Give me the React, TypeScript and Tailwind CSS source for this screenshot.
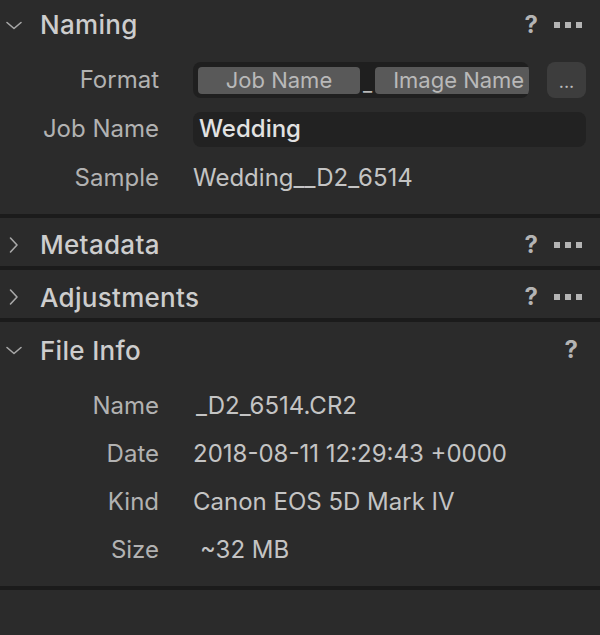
import React from "react";

function Chevron({ open }: { open: boolean }) {
  return open ? (
    <svg width="18" height="18" viewBox="0 0 18 18" className="text-[#a8a8a8]">
      <path d="M2 6.5 L9 12.5 L16 6.5" fill="none" stroke="currentColor" strokeWidth="1.6" strokeLinecap="round" strokeLinejoin="round" />
    </svg>
  ) : (
    <svg width="18" height="18" viewBox="0 0 18 18" className="text-[#a8a8a8]">
      <path d="M5.5 2 L12 9 L5.5 16" fill="none" stroke="currentColor" strokeWidth="1.6" strokeLinecap="round" strokeLinejoin="round" />
    </svg>
  );
}

function Dots() {
  return (
    <div className="flex items-center gap-[5px]">
      <span className="w-[6px] h-[6px] bg-[#b4b4b4]" />
      <span className="w-[6px] h-[6px] bg-[#b4b4b4]" />
      <span className="w-[6px] h-[6px] bg-[#b4b4b4]" />
    </div>
  );
}

function Header({
  title,
  open,
  more = true,
  className = "",
}: {
  title: string;
  open: boolean;
  more?: boolean;
  className?: string;
}) {
  return (
    <div className={`flex items-center h-12 pl-[5px] pr-[18px] ${className}`}>
      <div className="w-[35px] flex items-center">
        <Chevron open={open} />
      </div>
      <span className="text-[26px] font-medium text-[#cdcdcd] tracking-[0.3px]">{title}</span>
      <div className="ml-auto flex items-center gap-[16px]">
        <span className={`text-[24px] font-bold text-[#b4b4b4] ${more ? "" : "mr-[4px]"}`}>?</span>
        {more && <Dots />}
      </div>
    </div>
  );
}

function Row({ label, children }: { label: string; children: React.ReactNode }) {
  return (
    <div className="flex items-center h-9">
      <div className="w-[159px] text-right text-[24px] text-[#b2b2b2] shrink-0">{label}</div>
      <div className="ml-[34px] flex-1 flex items-center text-[24px] text-[#c4c4c4] whitespace-nowrap">
        {children}
      </div>
    </div>
  );
}

function Separator() {
  return <div className="h-1 bg-[#1b1b1b]" />;
}

export default function App() {
  return (
    <div
      className="w-[600px] h-[635px] bg-[#2b2b2b] overflow-hidden"
      style={{ fontFamily: "Inter, 'Noto Sans', sans-serif" }}
    >
      <Header title="Naming" open className="pt-[1px]" />
      <div className="flex flex-col gap-[13px] pt-[14px] pb-[18px] pr-[14px]">
        <Row label="Format">
          <div className="flex items-center gap-[18px] w-full">
            <div className="w-[336px] h-9 rounded-[8px] bg-[#1f1f1f] flex items-center pl-[5px] overflow-hidden">
              <div className="w-[162px] h-[27px] rounded-[4px] bg-[#595959] flex items-center justify-center text-[22px] text-[#b9b9b9] shrink-0">
                Job Name
              </div>
              <span className="mx-[3px] text-[20px] text-[#b9b9b9] leading-none self-end mb-[4px]">_</span>
              <div className="h-[27px] rounded-l-[4px] bg-[#595959] flex items-center pl-[18px] text-[22px] text-[#b9b9b9] whitespace-nowrap flex-1">
                Image Name
              </div>
            </div>
            <div className="w-[39px] h-9 rounded-[8px] bg-[#3d3d3d] flex items-center justify-center text-[18px] text-[#bdbdbd] pt-[2px]">
              ...
            </div>
          </div>
        </Row>
        <Row label="Job Name">
          <div className="w-full h-[35px] rounded-[8px] bg-[#222222] flex items-center pl-[6px] font-medium text-[#e2e2e2]">
            Wedding
          </div>
        </Row>
        <Row label="Sample">Wedding__D2_6514</Row>
      </div>
      <Separator />
      <Header title="Metadata" open={false} className="pt-[5px]" />
      <Separator />
      <Header title="Adjustments" open={false} className="pt-[6px]" />
      <Separator />
      <Header title="File Info" open more={false} className="pt-[8px]" />
      <div className="flex flex-col gap-3 pt-[18px] pb-[18px]">
        <Row label="Name"><span className="ml-[3px]">_D2_6514.CR2</span></Row>
        <Row label="Date">2018-08-11 12:29:43 +0000</Row>
        <Row label="Kind">Canon EOS 5D Mark IV</Row>
        <Row label="Size"><span className="ml-[7px]">~32 MB</span></Row>
      </div>
      <Separator />
    </div>
  );
}
